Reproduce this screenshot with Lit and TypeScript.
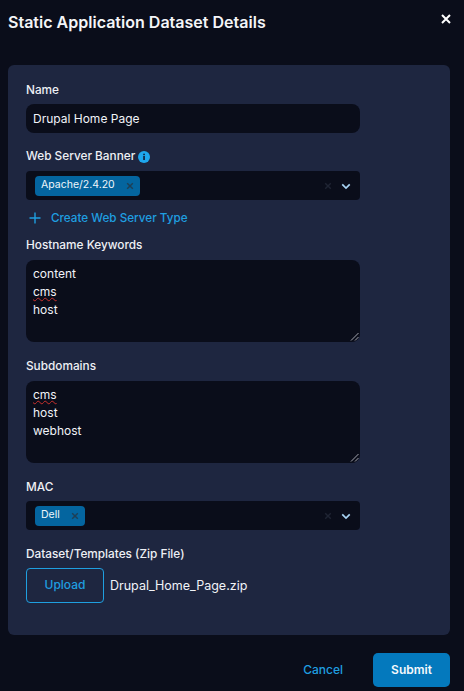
import { LitElement, html, css } from "lit";
import { customElement } from "lit/decorators.js";

const xIcon = html`<svg viewBox="0 0 10 10" width="8" height="8" aria-hidden="true"><path d="M1.5 1.5l7 7M8.5 1.5l-7 7" fill="none" stroke="currentColor" stroke-width="1.8"/></svg>`;
const chevron = html`<svg viewBox="0 0 12 8" width="10" height="7" aria-hidden="true"><path d="M1.5 1.5L6 6l4.5-4.5" fill="none" stroke="currentColor" stroke-width="2"/></svg>`;

@customElement("app-root")
export class AppRoot extends LitElement {
  static styles = css`
    :host { display: block; width: 464px; height: 691px; overflow: hidden; background: #0a0d1a; color: #f1f3f8; font-family: Inter, "Liberation Sans", sans-serif; font-size: 12px; }
    * { box-sizing: border-box; }
    .head { display: flex; justify-content: space-between; align-items: flex-start; height: 65px; padding: 12px 13px 0 8px; }
    h1 { margin: 0; font-size: 16.05px; line-height: 20px; font-weight: 600; color: #f4f5f8; }
    .close { color: #fff; margin-top: 2px; display: flex; }
    .panel { margin: 0 14px 0 8px; height: 570px; background: #1e2640; border-radius: 6px; padding: 17px 18px 0; }
    .field { width: 334px; }
    label { display: flex; align-items: center; gap: 3px; padding-top: 1px; margin-bottom: -1px; font-size: 11.8px; line-height: 15px; font-weight: 500; color: #eef0f5; }
    label.flat { padding-top: 0; margin-bottom: 0; }
    .input { height: 29px; margin-top: 7px; background: #0a0d1a; border-radius: 8px; padding: 0 7px; display: flex; align-items: center; font-size: 12px; }
    .select { height: 29px; margin-top: 7px; background: #0a0d1a; border-radius: 4px; padding: 0 9px; display: flex; align-items: center; }
    .chip { height: 20px; background: #04659f; border-radius: 4px; padding: 0 6px 2px; display: flex; align-items: center; font-size: 10.5px; color: #eef6fb; }
    .chip .text { margin-right: 11px; }
    .chip .x { color: #1f3f55; display: flex; margin-top: 2px; }
    .spacer { flex: 1; }
    .clear { color: #1f2433; display: flex; margin-right: 9px; margin-top: 1px; }
    .chev { color: #a8d4f5; display: flex; margin-top: 1px; }
    .info { width: 12px; height: 12px; display: flex; }
    .create { display: flex; align-items: center; gap: 10px; height: 18px; margin: 9px 0 10px 3px; color: #1f9fe0; font-size: 11.7px; font-weight: 500; }
    .area { height: 82px; margin-top: 8px; background: #0a0d1a; border-radius: 8px; padding: 5px 7px; font-size: 12px; line-height: 18px; overflow: hidden; position: relative; }
    .area div { height: 18px; }
    .wavy { text-decoration: underline wavy #c8302c 1px; text-underline-offset: 1px; }
    .grip { position: absolute; right: 1px; bottom: 1px; display: flex; }
    .gap-s { margin-top: 16px; }
    .upload-row { display: flex; align-items: center; gap: 6px; margin-top: 7px; }
    .upload { width: 78px; height: 35px; border: 1px solid #1f9fe0; border-radius: 4px; color: #1f9fe0; display: flex; align-items: center; justify-content: center; font-size: 12px; font-weight: 500; padding-bottom: 2px; }
    .file { font-size: 12.5px; color: #f1f3f8; }
    .foot { display: flex; justify-content: flex-end; align-items: center; gap: 30px; margin-top: 18px; padding-right: 14px; }
    .cancel { color: #1f9fe0; font-size: 12px; font-weight: 500; padding-bottom: 1px; }
    .submit { width: 77px; height: 34px; background: #0479bd; border-radius: 5px; color: #f4f8fb; display: flex; align-items: center; justify-content: center; font-size: 12px; font-weight: 600; padding-bottom: 1px; }
  `;

  private select(value: string) {
    return html`<div class="select">
      <span class="chip"><span class="text">${value}</span><span class="x">${xIcon}</span></span>
      <span class="spacer"></span>
      <span class="clear">${xIcon}</span>
      <span class="chev">${chevron}</span>
    </div>`;
  }

  private area(lines: string[]) {
    return html`<div class="area">
      ${lines.map((l) => html`<div><span class=${l === "cms" ? "wavy" : ""}>${l}</span></div>`)}
      <span class="grip"><svg viewBox="0 0 9 9" width="9" height="9" aria-hidden="true"><path d="M1 8.5L8.5 1M5 8.5L8.5 5" stroke="#c9ccd4" stroke-width="0.8" fill="none"/></svg></span>
    </div>`;
  }

  render() {
    return html`
      <div class="head">
        <h1>Static Application Dataset Details</h1>
        <span class="close"><svg viewBox="0 0 10 10" width="10" height="10" aria-hidden="true"><path d="M1 1l8 8M9 1L1 9" fill="none" stroke="currentColor" stroke-width="2"/></svg></span>
      </div>
      <div class="panel">
        <div class="field">
          <label>Name</label>
          <div class="input">Drupal Home Page</div>
        </div>
        <div class="field gap-s">
          <label class="flat">Web Server Banner
            <svg class="info" viewBox="0 0 12 12" aria-hidden="true"><circle cx="6" cy="6" r="6" fill="#1ea7ee"/><rect x="5.2" y="5" width="1.7" height="4" fill="#12233f"/><rect x="5.2" y="2.7" width="1.7" height="1.5" fill="#12233f"/></svg>
          </label>
          ${this.select("Apache/2.4.20")}
        </div>
        <div class="create">
          <svg viewBox="0 0 12 12" width="12" height="12" aria-hidden="true"><path d="M6 .5v11M.5 6h11" stroke="currentColor" stroke-width="1.4" fill="none"/></svg>
          <span>Create Web Server Type</span>
        </div>
        <div class="field">
          <label>Hostname Keywords</label>
          ${this.area(["content", "cms", "host"])}
        </div>
        <div class="field gap-s">
          <label>Subdomains</label>
          ${this.area(["cms", "host", "webhost"])}
        </div>
        <div class="field gap-s">
          <label>MAC</label>
          ${this.select("Dell")}
        </div>
        <div class="field gap-s">
          <label>Dataset/Templates (Zip File)</label>
          <div class="upload-row">
            <span class="upload">Upload</span>
            <span class="file">Drupal_Home_Page.zip</span>
          </div>
        </div>
      </div>
      <div class="foot">
        <span class="cancel">Cancel</span>
        <span class="submit">Submit</span>
      </div>
    `;
  }
}
